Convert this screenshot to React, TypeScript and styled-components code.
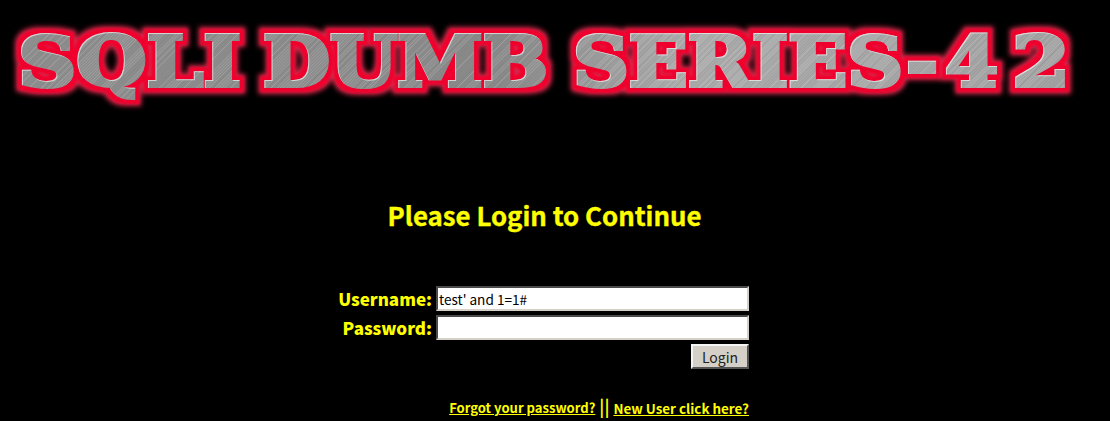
import React from "react";
import styled, { createGlobalStyle } from "styled-components";

const Global = createGlobalStyle`
  html, body { margin: 0; padding: 0; background: #000; }
  body { font-family: "Noto Sans CJK SC", "Noto Sans", sans-serif; overflow: hidden; }
`;

const Page = styled.div`
  width: 1110px;
  height: 421px;
  background: #000;
  display: flex;
  flex-direction: column;
  overflow: hidden;
`;

const LogoSvg = styled.svg`
  display: block;
  width: 1110px;
  height: 120px;
  flex: none;
`;

const Heading = styled.h1`
  margin: 77px 0 0;
  width: 1089px;
  text-align: center;
  color: #ffff00;
  font-size: 25.8px;
  line-height: 36px;
  font-weight: 700;
  -webkit-text-stroke: 0.35px #ffff00;
`;

const FormGrid = styled.form`
  margin: 53px 0 0 320px;
  width: 429px;
  display: grid;
  grid-template-columns: 112px 313px;
  column-gap: 4px;
  row-gap: 4px;
  align-items: center;
`;

const Label = styled.label`
  color: #ffff00;
  font-size: 17px;
  line-height: 25px;
  font-weight: 900;
  text-align: right;
`;

const TextInput = styled.input`
  box-sizing: border-box;
  width: 313px;
  height: 25px;
  margin: 0;
  padding: 1px 1px;
  border: 2px solid;
  border-color: #4a4a4a #d4d0c8 #d4d0c8 #4a4a4a;
  background: #fff;
  color: #000;
  font-family: "Noto Sans CJK SC", "Noto Sans", sans-serif;
  font-size: 13.6px;
  outline: none;
`;

const ButtonCell = styled.div`
  grid-column: 2;
  display: flex;
  justify-content: flex-end;
`;

const LoginButton = styled.button`
  box-sizing: border-box;
  width: 58px;
  height: 25px;
  padding: 0;
  border: 2px solid;
  border-color: #f4f4f4 #555 #555 #f4f4f4;
  background: #d4d0c8;
  color: #222;
  font-family: "Noto Sans CJK SC", "Noto Sans", sans-serif;
  font-size: 14px;
  line-height: 20px;
`;

const LinksRow = styled.div`
  margin: 28px 0 0;
  width: 749px;
  display: flex;
  justify-content: flex-end;
  align-items: center;
  gap: 4px;
  color: #ffff00;
`;

const YellowLink = styled.a<{ $size: number }>`
  color: #ffff00;
  font-size: ${(p) => p.$size}px;
  line-height: 22px;
  font-weight: 700;
  text-decoration: underline;
`;

const Divider = styled.span`
  font-size: 17px;
  line-height: 16px;
  margin-bottom: 4px;
  font-weight: 700;
`;

const words: { t: string; x: number; w: number }[] = [
  { t: "SQLI", x: 18, w: 223 },
  { t: "DUMB", x: 263, w: 285 },
  { t: "SERIES-", x: 573, w: 365 },
  { t: "4", x: 945, w: 53 },
  { t: "2", x: 1012, w: 58 },
];

// Brushed-metal streaks: diagonal hairlines with a repeatable pseudo-random spread.
const streaks = Array.from({ length: 420 }, (_, i) => {
  const r = (Math.sin(i * 12.9898) * 43758.5453) % 1;
  const v = Math.abs(r);
  return { x: i * 3.1 - 40, light: v > 0.5, op: 0.1 + v * 0.22 };
});

function Logo() {
  return (
    <LogoSvg viewBox="0 0 1110 120" role="img" aria-label="SQLI DUMB SERIES-4 2">
      <defs>
        <linearGradient id="metal" gradientUnits="userSpaceOnUse" x1="0" y1="0" x2="1110" y2="0">
          <stop offset="0" stopColor="#8e8e8e" />
          <stop offset="0.45" stopColor="#8a8a8a" />
          <stop offset="0.62" stopColor="#adadad" />
          <stop offset="1" stopColor="#a2a2a2" />
        </linearGradient>
        <pattern id="brush" width="1110" height="120" patternUnits="userSpaceOnUse">
          <rect width="1110" height="120" fill="url(#metal)" />
          {streaks.map((s, i) => (
            <line
              key={i}
              x1={s.x}
              y1="120"
              x2={s.x + 120}
              y2="0"
              stroke={s.light ? "#d0d0d0" : "#5e5e5e"}
              strokeOpacity={s.op}
              strokeWidth="1"
            />
          ))}
        </pattern>
        <filter id="logoFx" x="-2%" y="-30%" width="104%" height="160%" colorInterpolationFilters="sRGB">
          <feMorphology in="SourceAlpha" operator="dilate" radius="5.5" result="wide" />
          <feGaussianBlur in="wide" stdDeviation="2.8" result="wideBlur" />
          <feFlood floodColor="#d8284a" result="pink" />
          <feComposite in="pink" in2="wideBlur" operator="in" result="halo" />
          <feMorphology in="SourceAlpha" operator="dilate" radius="3.5" result="mid" />
          <feGaussianBlur in="mid" stdDeviation="1.1" result="midBlur" />
          <feFlood floodColor="#f0002d" result="red" />
          <feComposite in="red" in2="midBlur" operator="in" result="core" />
          <feOffset in="SourceAlpha" dx="0.8" dy="0.8" result="shift" />
          <feComposite in="SourceAlpha" in2="shift" operator="out" result="edge" />
          <feFlood floodColor="#f2f2f2" floodOpacity="0.7" result="white" />
          <feComposite in="white" in2="edge" operator="in" result="highlight" />
          <feMerge>
            <feMergeNode in="halo" />
            <feMergeNode in="core" />
            <feMergeNode in="SourceGraphic" />
            <feMergeNode in="highlight" />
          </feMerge>
        </filter>
      </defs>
      <g
        fontFamily="'DejaVu Serif', serif"
        fontWeight="700"
        fontSize="70"
        fill="url(#brush)"
        stroke="url(#brush)"
        strokeWidth="4"
        strokeLinejoin="miter"
        filter="url(#logoFx)"
      >
        {words.map((w) => (
          <text key={w.t} x={w.x} y="86" textLength={w.w} lengthAdjust="spacingAndGlyphs">
            {w.t}
          </text>
        ))}
      </g>
    </LogoSvg>
  );
}

export default function App() {
  return (
    <Page>
      <Global />
      <Logo />
      <Heading>Please Login to Continue</Heading>
      <FormGrid onSubmit={(e) => e.preventDefault()}>
        <Label htmlFor="u">Username:</Label>
        <TextInput id="u" type="text" defaultValue="test' and 1=1#" />
        <Label htmlFor="p">Password:</Label>
        <TextInput id="p" type="password" />
        <ButtonCell>
          <LoginButton type="submit">Login</LoginButton>
        </ButtonCell>
      </FormGrid>
      <LinksRow>
        <YellowLink href="#" $size={13.05}>Forgot your password?</YellowLink>
        <Divider>||</Divider>
        <YellowLink href="#" $size={13.4}>New User click here?</YellowLink>
      </LinksRow>
    </Page>
  );
}
